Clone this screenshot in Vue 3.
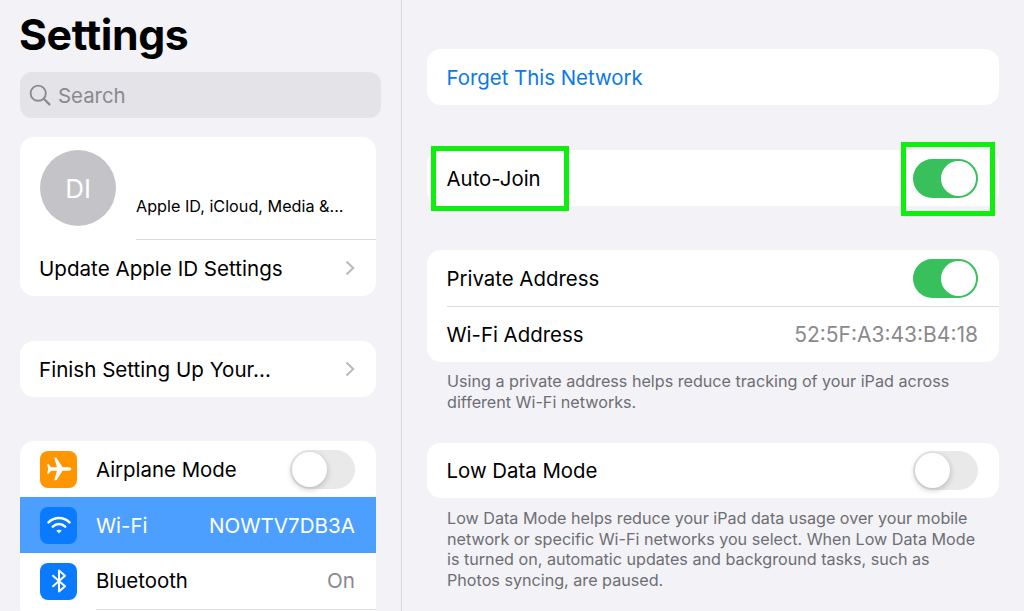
<template>
  <div class="page">
    <aside class="sidebar">
      <h1 class="title">Settings</h1>
      <div class="search">
        <svg class="search-icon" width="22" height="22" viewBox="0 0 22 22" fill="none">
          <circle cx="9.2" cy="9.2" r="7.6" stroke="#8a8a8e" stroke-width="1.9" />
          <path d="M14.8 14.8 L20.4 20.4" stroke="#8a8a8e" stroke-width="2.2" stroke-linecap="round" />
        </svg>
        <span>Search</span>
      </div>

      <section class="card account">
        <div class="profile">
          <div class="avatar">DI</div>
          <div class="profile-text">Apple ID, iCloud, Media &amp;...</div>
        </div>
        <div class="side-row update">
          <span>Update Apple ID Settings</span>
          <svg class="chevron" width="10" height="16" viewBox="0 0 10 16" fill="none">
            <path d="M1.5 1.5 L8.2 8 L1.5 14.5" stroke="#b9b9bd" stroke-width="2" />
          </svg>
        </div>
      </section>

      <section class="card finish">
        <div class="side-row update">
          <span>Finish Setting Up Your...</span>
          <svg class="chevron" width="10" height="16" viewBox="0 0 10 16" fill="none">
            <path d="M1.5 1.5 L8.2 8 L1.5 14.5" stroke="#b9b9bd" stroke-width="2" />
          </svg>
        </div>
      </section>

      <section class="card net">
        <div class="net-row">
          <div class="tile orange">
            <svg width="30" height="30" viewBox="0 0 28 28" fill="#fff">
              <path d="M25.5 14c0-1.1-1.300-1.700-3-1.700h-5.200L11.600 3.600H9.600l2.500 8.700H6.500L4.500 9.600H2.900L3.900 14l-1 4.400h1.600l2-2.700h5.600l-2.500 8.700h2l5.700-8.700h5.200c1.700 0 3-.6 3-1.700z" />
            </svg>
          </div>
          <span class="net-label">Airplane Mode</span>
          <div class="toggle off"><i></i></div>
        </div>
        <div class="net-row selected">
          <div class="tile blue">
            <svg width="26" height="22" viewBox="0 0 26 22" fill="none" stroke="#fff" stroke-width="2.5" stroke-linecap="round">
              <path d="M2.500 8.300 C8.500 2.700 17.500 2.700 23.500 8.300" />
              <path d="M6.800 12.600 C10.600 9.200 15.400 9.200 19.200 12.600" />
              <path d="M13 19.500 L10.300 16.600 C11.900 15.300 14.100 15.300 15.700 16.600 Z" fill="#fff" stroke="none" />
            </svg>
          </div>
          <span class="net-label">Wi-Fi</span>
          <span class="net-value">NOWTV7DB3A</span>
        </div>
        <div class="net-row">
          <div class="tile blue">
            <svg width="18" height="28" viewBox="0 0 18 28" fill="none" stroke="#fff" stroke-width="2">
              <path d="M3 8.800 L15 19.300 L9 24.500 V3.500 L15 8.700 L3 19.200" stroke-linejoin="round" stroke-linecap="round" />
            </svg>
          </div>
          <div class="net-body">
            <span class="net-label">Bluetooth</span>
            <span class="net-value grey">On</span>
          </div>
        </div>
      </section>
    </aside>

    <main class="detail">
      <section class="group forget">
        <div class="row link">Forget This Network</div>
      </section>

      <section class="group autojoin">
        <div class="row">
          <span>Auto-Join</span>
          <div class="toggle on"><i></i></div>
        </div>
      </section>

      <section class="group">
        <div class="row">
          <span>Private Address</span>
          <div class="toggle on"><i></i></div>
        </div>
        <div class="row ruled">
          <span>Wi-Fi Address</span>
          <span class="address">52:5F:A3:43:B4:18</span>
        </div>
      </section>
      <p class="note">Using a private address helps reduce tracking of your iPad across different Wi-Fi networks.</p>

      <section class="group low">
        <div class="row">
          <span>Low Data Mode</span>
          <div class="toggle off"><i></i></div>
        </div>
      </section>
      <p class="note">Low Data Mode helps reduce your iPad data usage over your mobile network or specific Wi-Fi networks you select. When Low Data Mode is turned on, automatic updates and background tasks, such as Photos syncing, are paused.</p>
    </main>

    <div class="mark mark-label"></div>
    <div class="mark mark-toggle"></div>
  </div>
</template>

<script setup>
</script>

<style>
html,
body {
  margin: 0;
  overflow: hidden;
}
</style>

<style scoped>
.page {
  position: relative;
  display: flex;
  width: 1024px;
  height: 611px;
  overflow: hidden;
  background: #f2f2f7;
  color: #000;
  font-family: Inter, "Liberation Sans", sans-serif;
  font-size: 20.400px;
}

.sidebar {
  box-sizing: border-box;
  width: 402px;
  flex: none;
  padding: 0 20px;
  border-right: 1px solid #d8d8dc;
}

.title {
  margin: 9px 0 0 -1px;
  font-size: 42.800px;
  line-height: 52px;
  font-weight: 700;
  letter-spacing: -0.4px;
}

.search {
  display: flex;
  align-items: center;
  gap: 7px;
  width: 361px;
  height: 46px;
  margin-top: 11px;
  padding-left: 9px;
  box-sizing: border-box;
  border-radius: 12px;
  background: #e3e3e8;
  color: #8a8a8e;
  font-size: 20.400px;
}

.card {
  width: 356px;
  border-radius: 14px;
  background: #fff;
  overflow: hidden;
}

.account {
  margin-top: 19px;
  height: 159px;
}

.profile {
  display: flex;
  height: 103px;
  padding-left: 20px;
}

.avatar {
  display: flex;
  align-items: center;
  justify-content: center;
  width: 76px;
  height: 76px;
  margin-top: 13px;
  border-radius: 50%;
  background: #c4c4c8;
  color: #fff;
  font-size: 26px;
}

.profile-text {
  flex: 1;
  margin-left: 20px;
  padding-top: 58px;
  font-size: 16.200px;
  line-height: 22px;
  border-bottom: 1px solid #dcdcdf;
}

.side-row {
  display: flex;
  align-items: center;
  justify-content: space-between;
  height: 56px;
  padding: 0 21px 0 19px;
  font-size: 20.600px;
}

.finish {
  margin-top: 45px;
  height: 56px;
}

.net {
  margin-top: 44px;
  height: 180px;
}

.net-row {
  display: flex;
  align-items: center;
  height: 56px;
  padding: 0 21px 0 20px;
}

.selected {
  background: #4c9ffe;
  color: #fff;
}

.tile {
  display: flex;
  align-items: center;
  justify-content: center;
  width: 37px;
  height: 37px;
  flex: none;
  margin-right: 19px;
  border-radius: 8px;
}

.orange {
  background: #ff9500;
}

.blue {
  background: #0a7aff;
}

.net-label {
  flex: 1;
}

.net-value {
  color: #fff;
  font-size: 20.600px;
}

.net-value.grey {
  color: #8a8a8e;
}

.net-body {
  display: flex;
  flex: 1;
  align-items: center;
  height: 56px;
  border-bottom: 1px solid #dcdcdf;
  margin-right: -21px;
  padding-right: 21px;
}

.detail {
  flex: 1;
  box-sizing: border-box;
  padding: 49px 25px 0;
}

.group {
  margin-bottom: 45px;
  border-radius: 14px;
  background: #fff;
  overflow: hidden;
}

.autojoin {
  margin-bottom: 44px;
}

.row {
  display: flex;
  align-items: center;
  justify-content: space-between;
  height: 56px;
  padding: 0 21px 0 19.500px;
}

.link {
  color: #0a7ae6;
}

.ruled {
  position: relative;
}

.ruled::before {
  content: "";
  position: absolute;
  top: 0;
  left: 20px;
  right: 0;
  border-top: 1px solid #dcdcdf;
}

.address {
  color: #8a8a8e;
  font-size: 21px;
}

.note {
  margin: -36px 19px 0 20px;
  color: #6e6e73;
  font-size: 16.150px;
  line-height: 20.500px;
}

.low {
  margin-top: 31px;
  margin-bottom: 46px;
}

.low .row {
  height: 55px;
}

.toggle {
  position: relative;
  box-sizing: border-box;
  width: 65px;
  height: 39px;
  flex: none;
  border-radius: 20px;
}

.toggle i {
  position: absolute;
  top: 2px;
  width: 35px;
  height: 35px;
  border-radius: 50%;
  background: #fff;
}

.toggle.on {
  background: #37c05c;
}

.toggle.on i {
  right: 2px;
}

.toggle.off {
  background: #e9e9ea;
}

.toggle.off i {
  left: 2px;
  box-shadow: 0 2px 6px rgba(0, 0, 0, 0.22);
}

.mark {
  position: absolute;
  box-sizing: border-box;
  border: 5px solid #0cf00c;
}

.mark-label {
  left: 431px;
  top: 146px;
  width: 138px;
  height: 65px;
}

.mark-toggle {
  left: 901px;
  top: 142px;
  width: 94px;
  height: 74px;
}
</style>
